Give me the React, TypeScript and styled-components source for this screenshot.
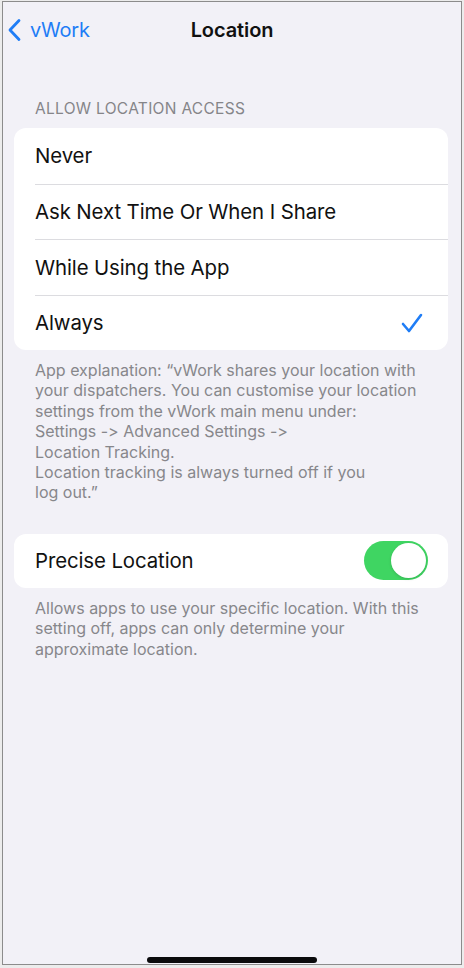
import React from "react";
import styled, { createGlobalStyle } from "styled-components";

const Global = createGlobalStyle`
  html, body {
    margin: 0;
    padding: 0;
    background: #ececec;
  }
  body {
    font-family: Inter, "Noto Sans", sans-serif;
    font-feature-settings: "calt" 0, "liga" 0;
    -webkit-font-smoothing: antialiased;
  }
`;

const Outer = styled.div`
  padding: 1px 2px 3px 2px;
  width: 464px;
  box-sizing: border-box;
`;

const Screen = styled.div`
  box-sizing: border-box;
  width: 460px;
  height: 964px;
  border: 1px solid #8c8c8c;
  background: #f2f1f7;
  display: flex;
  flex-direction: column;
`;

const NavBar = styled.div`
  height: 56px;
  display: grid;
  grid-template-columns: 1fr auto 1fr;
  align-items: center;
  padding: 0 4px;
`;

const Back = styled.div`
  display: flex;
  align-items: center;
  gap: 9px;
  color: #1f7df6;
  font-size: 20px;
  letter-spacing: -0.2px;
`;

const Title = styled.div`
  font-size: 20px;
  font-weight: 600;
  color: #111;
  letter-spacing: -0.1px;
`;

const Section = styled.section<{ $top: number }>`
  margin-top: ${(p) => p.$top}px;
  padding: 0 13px 0 11px;
`;

const Header = styled.div`
  padding-left: 21px;
  font-size: 15.5px;
  line-height: 18px;
  color: #858589;
  letter-spacing: 0.3px;
  margin-bottom: 10px;
`;

const Card = styled.div`
  background: #ffffff;
  border-radius: 12px;
  overflow: hidden;
`;

const Row = styled.div<{ $h: number }>`
  height: ${(p) => p.$h}px;
  margin-left: 21px;
  padding-right: 20px;
  display: flex;
  align-items: center;
  justify-content: space-between;
  font-size: 20.4px;
  color: #111;
  letter-spacing: -0.1px;
  box-sizing: border-box;
  & + & {
    border-top: 1px solid #dcdce0;
  }
`;

const Footer = styled.div`
  padding-left: 21px;
  margin-top: 10px;
  font-size: 16px;
  line-height: 20.4px;
  color: #87878b;
  white-space: nowrap;
`;

const Toggle = styled.div<{ $on: boolean }>`
  width: 64px;
  height: 39px;
  border-radius: 20px;
  background: ${(p) => (p.$on ? "#3fd562" : "#e5e5ea")};
  display: flex;
  align-items: center;
  justify-content: ${(p) => (p.$on ? "flex-end" : "flex-start")};
  padding: 2px;
  box-sizing: border-box;
`;

const Knob = styled.div`
  width: 35px;
  height: 35px;
  border-radius: 50%;
  background: #fff;
  box-shadow: 0 1px 3px rgba(0, 0, 0, 0.15);
`;

const CheckWrap = styled.span`
  display: flex;
  margin-right: 5px;
`;

const HomeBar = styled.div`
  margin-top: auto;
  align-self: center;
  width: 170px;
  height: 6px;
  border-radius: 3px;
  background: #0a0a0c;
  margin-bottom: 1px;
`;

const Chevron = () => (
  <svg width="14" height="24" viewBox="0 0 14 24" fill="none">
    <path
      d="M12 2.5 L3 12 L12 21.5"
      stroke="#1f7df6"
      strokeWidth="2.8"
      strokeLinecap="round"
      strokeLinejoin="round"
    />
  </svg>
);

const Check = () => (
  <svg width="22" height="20" viewBox="0 0 22 20" fill="none">
    <path
      d="M2 11 L8 18 L20 2"
      stroke="#1f7df6"
      strokeWidth="2.6"
      strokeLinecap="round"
      strokeLinejoin="round"
    />
  </svg>
);

const options = ["Never", "Ask Next Time Or When I Share", "While Using the App", "Always"];
const selected = "Always";

export default function App() {
  return (
    <>
      <Global />
      <Outer>
        <Screen>
          <NavBar>
            <Back>
              <Chevron />
              <span>vWork</span>
            </Back>
            <Title>Location</Title>
            <span />
          </NavBar>

          <Section $top={42}>
            <Header>ALLOW LOCATION ACCESS</Header>
            <Card>
              {options.map((o) => (
                <Row key={o} $h={55.5}>
                  <span>{o}</span>
                  {o === selected && (
                    <CheckWrap>
                      <Check />
                    </CheckWrap>
                  )}
                </Row>
              ))}
            </Card>
            <Footer>
              App explanation: “vWork shares your location with
              <br />
              your dispatchers. You can customise your location
              <br />
              settings from the vWork main menu under:
              <br />
              Settings -&gt; Advanced Settings -&gt;
              <br />
              Location Tracking.
              <br />
              Location tracking is always turned off if you
              <br />
              log out.”
            </Footer>
          </Section>

          <Section $top={31}>
            <Card>
              <Row $h={54}>
                <span>Precise Location</span>
                <Toggle $on>
                  <Knob />
                </Toggle>
              </Row>
            </Card>
            <Footer>
              Allows apps to use your specific location. With this
              <br />
              setting off, apps can only determine your
              <br />
              approximate location.
            </Footer>
          </Section>

          <HomeBar />
        </Screen>
      </Outer>
    </>
  );
}
